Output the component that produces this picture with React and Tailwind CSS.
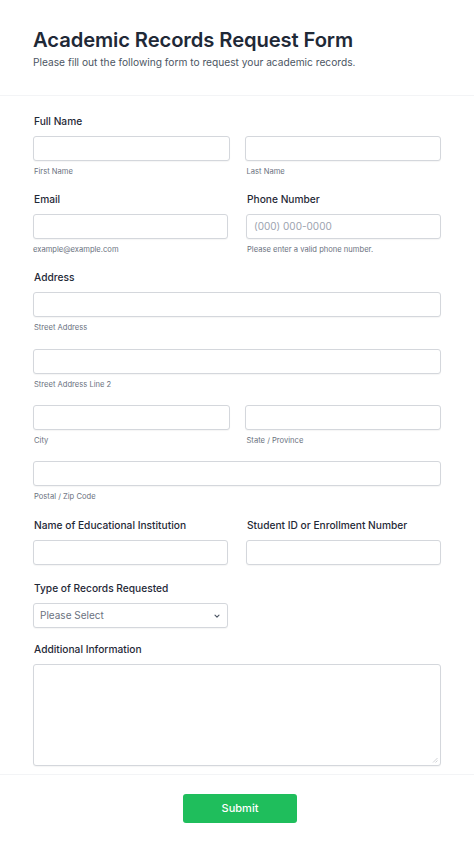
import React from "react";

function Input({ placeholder }) {
  return (
    <div className="h-[25px] rounded-[3px] border border-[#d4d7dc] bg-white shadow-[0_1px_1px_rgba(0,0,0,0.04)] px-[7px] flex items-center text-[10px] text-[#9ca3af]">
      {placeholder}
    </div>
  );
}

function Sub({ children }) {
  return <div className="mt-[5px] h-3 text-[7.6px] leading-3 text-[#6b7280]">{children}</div>;
}

function Label({ children }) {
  return <div className="h-4 leading-4 text-[10.2px] font-[450] text-[#1f2937] mb-[7px]">{children}</div>;
}

export default function App() {
  return (
    <div className="w-[474px] h-[849px] bg-white overflow-hidden" style={{ fontFamily: "Inter, 'Noto Sans', sans-serif" }}>
      <div className="px-[33px] pt-[26px] h-[96px] border-b border-[#f3f4f6]">
        <h1 className="text-[20.2px] leading-7 font-semibold text-[#1f2937] tracking-[-0.1px]">Academic Records Request Form</h1>
        <p className="text-[10.2px] leading-4 text-[#4b5563]">Please fill out the following form to request your academic records.</p>
      </div>

      <div className="px-[33px] pt-[17px] pb-[8px] border-b border-[#f3f4f6]">
        <div className="pl-[1px]"><Label>Full Name</Label></div>
        <div className="grid grid-cols-2 gap-[15px]">
          <div><Input /><div className="pl-[1px]"><Sub>First Name</Sub></div></div>
          <div><Input /><div className="pl-[2px]"><Sub>Last Name</Sub></div></div>
        </div>

        <div className="grid grid-cols-2 gap-[18px] mt-[13px]">
          <div><div className="pl-[1px]"><Label>Email</Label></div><Input /><Sub>example@example.com</Sub></div>
          <div><div className="pl-[1px]"><Label>Phone Number</Label></div><Input placeholder="(000) 000-0000" /><div className="pl-[1px]"><Sub>Please enter a valid phone number.</Sub></div></div>
        </div>

        <div className="mt-[13px]">
          <div className="pl-[1px]"><Label>Address</Label></div>
          <Input /><div className="pl-[1px]"><Sub>Street Address</Sub></div>
          <div className="mt-[15px]"><Input /><div className="pl-[1px]"><Sub>Street Address Line 2</Sub></div></div>
          <div className="grid grid-cols-2 gap-[15px] mt-[14px]">
            <div><Input /><div className="pl-[1px]"><Sub>City</Sub></div></div>
            <div><Input /><div className="pl-[2px]"><Sub>State / Province</Sub></div></div>
          </div>
          <div className="mt-[14px]"><Input /><div className="pl-[1px]"><Sub>Postal / Zip Code</Sub></div></div>
        </div>

        <div className="grid grid-cols-2 gap-[18px] mt-[14px]">
          <div><div className="pl-[1px]"><Label>Name of Educational Institution</Label></div><Input /></div>
          <div><div className="pl-[1px]"><Label>Student ID or Enrollment Number</Label></div><Input /></div>
        </div>

        <div className="mt-[15px]">
          <div className="pl-[1px]"><Label>Type of Records Requested</Label></div>
          <div className="w-[195px] h-[25px] rounded-[3px] border border-[#d4d7dc] bg-white shadow-[0_1px_1px_rgba(0,0,0,0.04)] pl-[6px] pr-[6px] flex items-center justify-between text-[10px] text-[#6b7280]">
            <span>Please Select</span>
            <svg width="8" height="8" viewBox="0 0 10 10" fill="none" stroke="#4b5563" strokeWidth="1.4" strokeLinecap="round" strokeLinejoin="round">
              <path d="M2.5 4 L5 6.5 L7.5 4" />
            </svg>
          </div>
        </div>

        <div className="mt-[13px]">
          <div className="pl-[1px]"><Label>Additional Information</Label></div>
          <div className="relative h-[102px] rounded-[3px] border border-[#d4d7dc] bg-white shadow-[0_1px_1px_rgba(0,0,0,0.04)]">
            <svg className="absolute right-[2px] bottom-[2px]" width="6" height="6" viewBox="0 0 6 6" stroke="#c4c7cc" strokeWidth="0.8">
              <path d="M5.5 1 L1 5.5 M5.5 3.5 L3.5 5.5" />
            </svg>
          </div>
        </div>
      </div>

      <div className="flex justify-center pt-[19px] pl-[6px]">
        <button className="w-[114px] h-[29px] rounded-[3px] bg-[#1fbe5c] text-white text-[11px] font-medium">Submit</button>
      </div>
    </div>
  );
}
